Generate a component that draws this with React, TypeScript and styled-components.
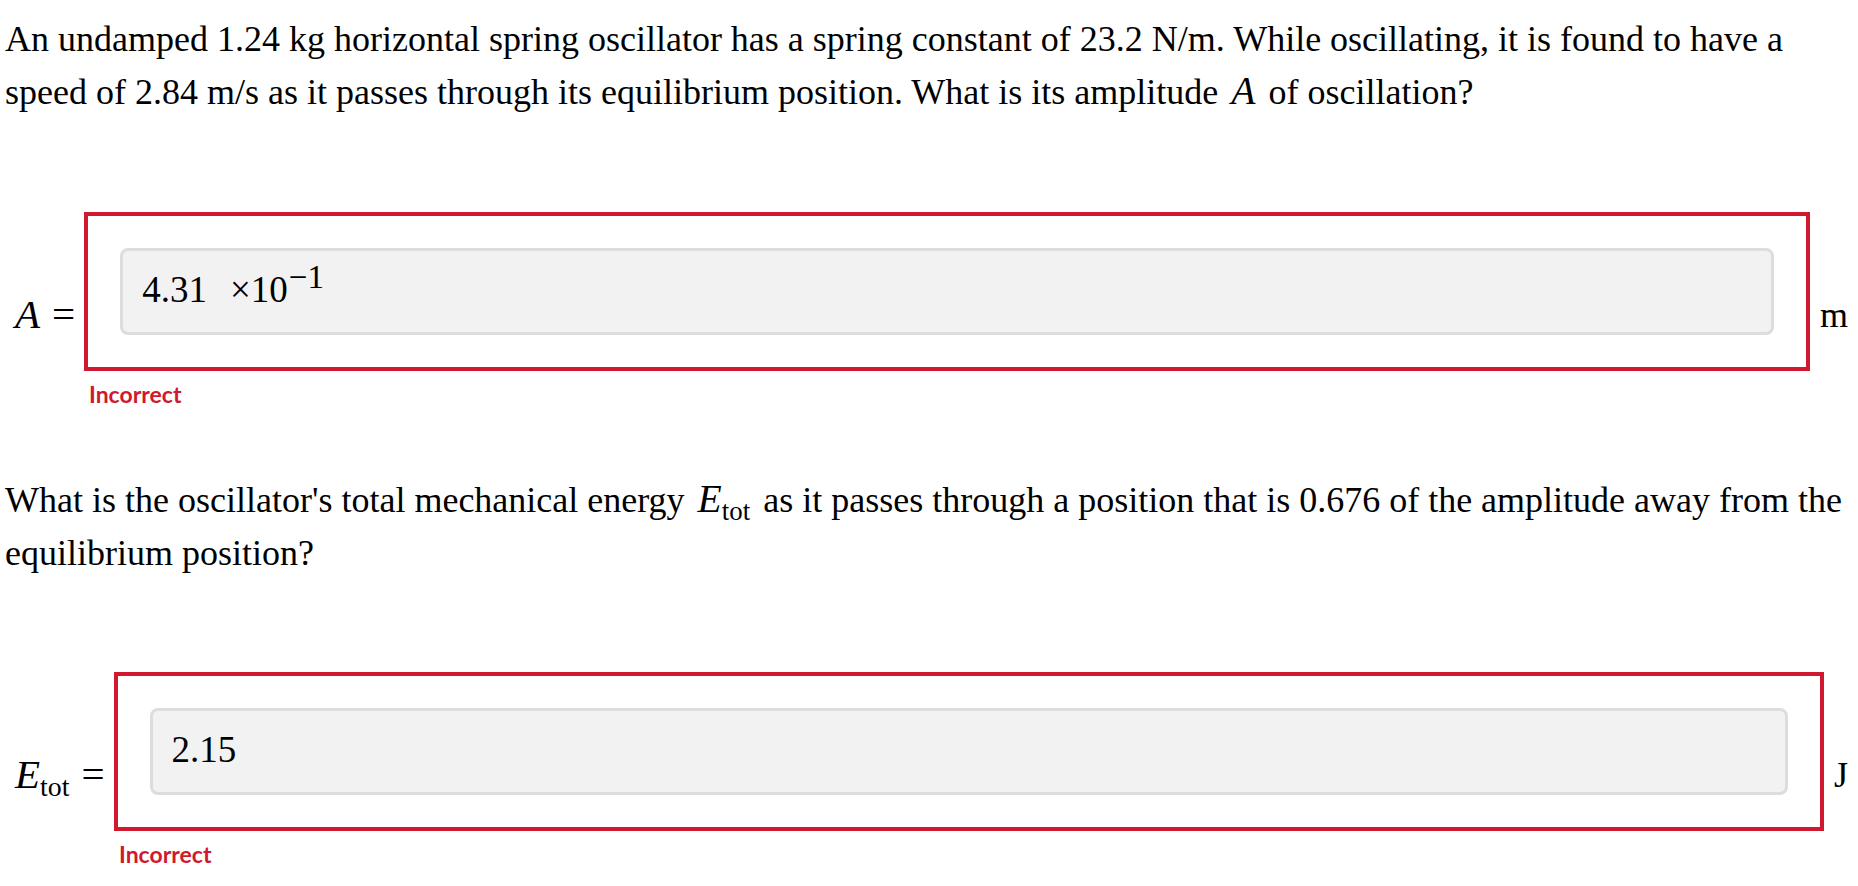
import React from 'react';
import styled, { createGlobalStyle } from 'styled-components';

const GlobalStyle = createGlobalStyle`
  html, body {
    margin: 0;
    padding: 0;
    background: #ffffff;
  }
  body {
    font-family: 'Liberation Serif', 'Times New Roman', serif;
    color: #000000;
  }
`;

const RED = '#d0192f';

const Page = styled.div`
  padding: 13px 10px 40px 5px;
`;

const Question = styled.p<{ gap?: number }>`
  margin: 0 0 ${props => props.gap ?? 93}px 0;
  font-size: 36px;
  line-height: 53px;
`;

const MathInline = styled.span`
  font-style: italic;
  font-size: 1.1em;
  line-height: 0;
  margin: 0 4px;
`;

const Sub = styled.span`
  font-style: normal;
  font-size: 0.68em;
  line-height: 0;
  vertical-align: -0.3em;
`;

const AnswerRow = styled.div`
  display: flex;
  align-items: center;
`;

const Label = styled.div`
  padding: 45px 0 0 10px;
  font-size: 41px;
  line-height: 53px;
  white-space: nowrap;
`;

const Variable = styled.span`
  font-style: italic;
`;

const Equals = styled.span`
  margin: 0 9px 0 12px;
`;

const AnswerBox = styled.div`
  flex: 1;
  border: 4px solid ${RED};
  padding: 32px;
`;

const InputField = styled.div`
  display: flex;
  align-items: center;
  height: 87px;
  padding: 0 0 4px 19px;
  box-sizing: border-box;
  background: #f2f2f2;
  border: 3px solid #dddddd;
  border-radius: 8px;
  font-size: 37px;
  line-height: 1;
`;

const Value = styled.span``;

const Times = styled.span`
  margin-left: 23px;
`;

const Sup = styled.span`
  font-size: 33px;
  align-self: flex-start;
  margin: 10px 0 0 1px;
`;

const Unit = styled.div`
  padding: 48px 0 0 10px;
  font-size: 36px;
  line-height: 53px;
`;

const Feedback = styled.div<{ indent: number }>`
  margin: 9px 0 66px ${props => props.indent}px;
  font-family: Lato, 'Open Sans', 'Liberation Sans', sans-serif;
  font-weight: 700;
  font-size: 23px;
  line-height: 28px;
  color: ${RED};
`;

export default function App() {
  return (
    <>
      <GlobalStyle />
      <Page>
        <Question>
          An undamped 1.24 kg horizontal spring oscillator has a spring constant of 23.2 N/m. While oscillating, it is found to have a speed of 2.84 m/s as it passes through its equilibrium position. What is its amplitude <MathInline>A</MathInline> of oscillation?
        </Question>

        <AnswerRow>
          <Label>
            <Variable>A</Variable><Equals>=</Equals>
          </Label>
          <AnswerBox>
            <InputField>
              <Value>4.31</Value>
              <Times>×10</Times>
              <Sup>−1</Sup>
            </InputField>
          </AnswerBox>
          <Unit>m</Unit>
        </AnswerRow>
        <Feedback indent={84}>Incorrect</Feedback>

        <Question gap={92}>
          What is the oscillator's total mechanical energy <MathInline>E<Sub>tot</Sub></MathInline> as it passes through a position that is 0.676 of the amplitude away from the equilibrium position?
        </Question>

        <AnswerRow>
          <Label>
            <Variable>E</Variable><Sub>tot</Sub><Equals>=</Equals>
          </Label>
          <AnswerBox>
            <InputField>
              <Value>2.15</Value>
            </InputField>
          </AnswerBox>
          <Unit>J</Unit>
        </AnswerRow>
        <Feedback indent={114}>Incorrect</Feedback>
      </Page>
    </>
  );
}
